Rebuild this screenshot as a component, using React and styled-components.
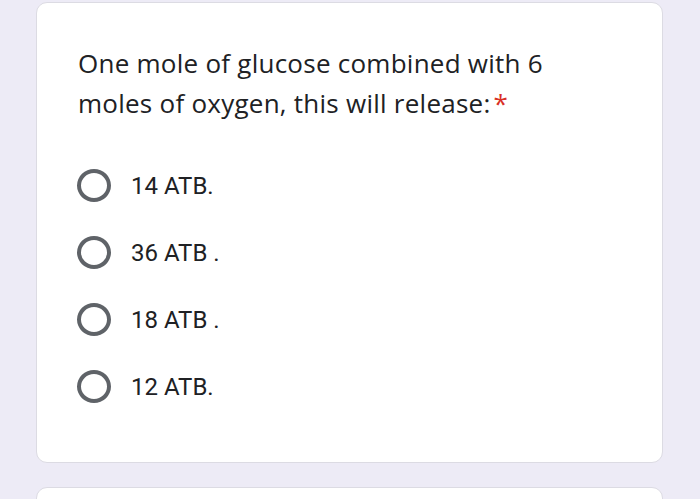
import styled, { createGlobalStyle } from "styled-components";

const Global = createGlobalStyle`
body {
  margin: 0;
  background-color: #edebf6;
  font-family: Roboto, "Liberation Sans", sans-serif;
}
`;

const Page = styled.div`
height: 499px;
overflow: hidden;
padding: 2px 37px 0 36px;
display: flex;
flex-direction: column;
gap: 24px;
`;

const Card = styled.div`
background-color: #ffffff;
border: 1px solid #dcdbe3;
border-radius: 11px;
height: ${(props) => props.h}px;
flex-shrink: 0;
box-sizing: border-box;
`;

const Question = styled.div`
padding: 40px 40px 0 41px;
font-family: "Open Sans", Roboto, sans-serif;
font-size: 26px;
letter-spacing: 0.25px;
line-height: 40px;
color: #202124;
`;

const Star = styled.span`
color: #d93025;
margin-left: 3px;
`;

const Options = styled.div`
margin-top: 46px;
padding-left: 40px;
display: flex;
flex-direction: column;
gap: 34px;
`;

const Option = styled.label`
display: flex;
align-items: center;
gap: 20px;
height: 33px;
font-size: 24px;
color: #202124;
`;

const Radio = styled.span`
width: 34px;
height: 33px;
box-sizing: border-box;
border: 4px solid #5f6368;
border-radius: 50%;
flex-shrink: 0;
`;

const answers = ["14 ATB.", "36 ATB .", "18 ATB .", "12 ATB."];

function App() {
  return (
    <Page>
      <Global />
      <Card h={461}>
        <Question>
          One mole of glucose combined with 6<br />
          moles of oxygen, this will release:<Star>*</Star>
        </Question>
        <Options>
          {answers.map((a) => (
            <Option key={a}>
              <Radio />
              {a}
            </Option>
          ))}
        </Options>
      </Card>
      <Card h={40} />
    </Page>
  );
}

export default App;
